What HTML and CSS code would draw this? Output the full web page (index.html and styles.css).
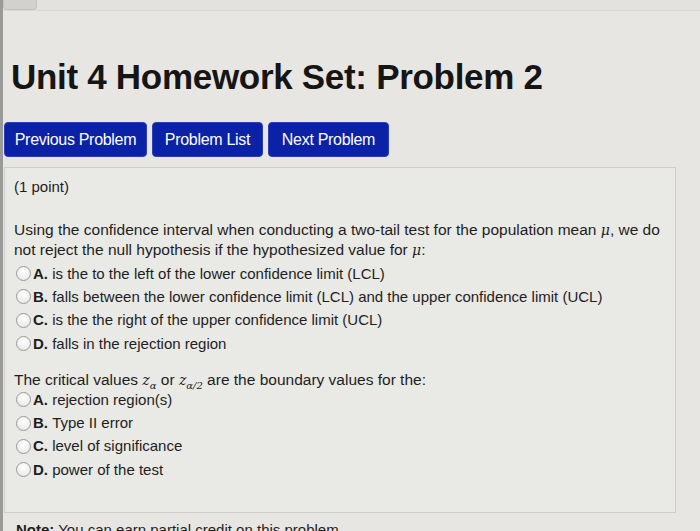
FILE: index.html
```html
<!DOCTYPE html>
<html>
<head>
<meta charset="utf-8">
<link rel="stylesheet" href="styles.css">
</head>
<body>
<div class="topbar"><div class="tab"></div></div>
<div class="page">
  <h1 class="title">Unit 4 Homework Set: Problem 2</h1>
  <div class="nav">
    <span class="btn btn-prev">Previous Problem</span>
    <span class="btn btn-list">Problem List</span>
    <span class="btn btn-next">Next Problem</span>
  </div>
  <div class="problem">
    <div class="points">(1 point)</div>
    <div class="question q1">Using the confidence interval when conducting a two-tail test for the population mean <i class="math">μ</i>, we do not reject the null hypothesis if the hypothesized value for <i class="math">μ</i>:</div>
    <div class="options">
      <div class="opt"><span class="radio"></span><b>A.</b>&nbsp;is the to the left of the lower confidence limit (LCL)</div>
      <div class="opt"><span class="radio"></span><b>B.</b>&nbsp;falls between the lower confidence limit (LCL) and the upper confidence limit (UCL)</div>
      <div class="opt"><span class="radio"></span><b>C.</b>&nbsp;is the the right of the upper confidence limit (UCL)</div>
      <div class="opt"><span class="radio"></span><b>D.</b>&nbsp;falls in the rejection region</div>
    </div>
    <div class="question q2">The critical values <i class="math">z<sub>α</sub></i> or <i class="math">z<sub>α/2</sub></i> are the boundary values for the:</div>
    <div class="options options2">
      <div class="opt"><span class="radio"></span><b>A.</b>&nbsp;rejection region(s)</div>
      <div class="opt"><span class="radio"></span><b>B.</b>&nbsp;Type II error</div>
      <div class="opt"><span class="radio"></span><b>C.</b>&nbsp;level of significance</div>
      <div class="opt"><span class="radio"></span><b>D.</b>&nbsp;power of the test</div>
    </div>
  </div>
  <div class="note"><b>Note:</b> You can earn partial credit on this problem.</div>
</div>
</body>
</html>
```
FILE: styles.css
```css
html, body {
  margin: 0;
  padding: 0;
}
body {
  background: #e7e6e2;
  font-family: "Liberation Sans", Arial, sans-serif;
  color: #1e1e1e;
  border-left: 3px solid #9a9a98;
  height: 531px;
  overflow: hidden;
  box-sizing: border-box;
}
.topbar {
  height: 10px;
  background: #e2e2de;
  border-bottom: 1px solid #d8d8d4;
}
.tab {
  width: 32px;
  height: 9px;
  background: #d2d1cd;
  border: 1px solid #c2c2be;
  border-top: none;
  border-radius: 0 0 4px 4px;
}
.page {
  padding: 0 0 0 1px;
}
.title {
  margin: 45px 0 0 7px;
  font-size: 35px;
  line-height: 42px;
  font-weight: bold;
  letter-spacing: -0.3px;
  color: #151515;
}
.nav {
  display: flex;
  gap: 5px;
  margin-top: 24px;
}
.btn {
  display: flex;
  align-items: center;
  justify-content: center;
  height: 35px;
  box-sizing: border-box;
  background: #0b22a6;
  color: #fff;
  font-size: 16px;
  border-radius: 4px;
  border: 1px solid #2a3fb8;
  letter-spacing: -0.3px;
}
.btn-prev { width: 143px; }
.btn-list { width: 111px; }
.btn-next { width: 121px; }
.problem {
  margin-top: 10px;
  width: 672px;
  box-sizing: border-box;
  border: 1px solid #cdcdc9;
  background: #e9e9e6;
  padding: 9px 4px 31px 9px;
  font-size: 15px;
  line-height: 20px;
}
.points {
  margin-bottom: 23px;
}
.question {
  font-size: 15.5px;
}
.math {
  font-family: "DejaVu Serif", "Liberation Serif", serif;
  font-style: italic;
  font-size: 14px;
}
.math sub {
  font-size: 10px;
  line-height: 0;
}
.options {
  margin-top: 2px;
}
.opt {
  display: flex;
  align-items: center;
  height: 23.3px;
}
.opt b {
  font-weight: bold;
}
.radio {
  width: 13px;
  height: 13px;
  border-radius: 50%;
  border: 1px solid #9a9a9a;
  background: radial-gradient(circle at 50% 35%, #ffffff, #e4e4e4);
  margin: 0 2px 0 2px;
  flex: none;
}
.q2 {
  margin-top: 15px;
}
.options2 {
  margin-top: -2px;
}
.note {
  margin: 8px 0 0 12px;
  font-size: 15px;
}
```
